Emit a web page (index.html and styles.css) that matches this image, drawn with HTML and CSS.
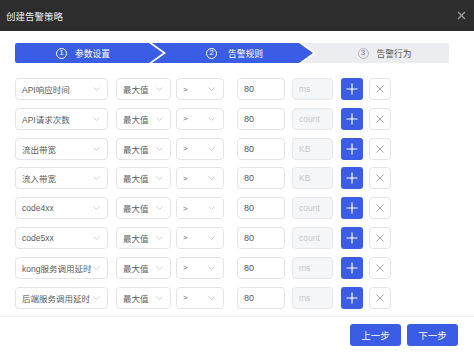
FILE: index.html
```html
<!DOCTYPE html>
<html lang="zh">
<head>
<meta charset="utf-8">
<link rel="stylesheet" href="styles.css">
</head>
<body>
<div class="dialog">
  <div class="header">
    <span class="title">创建告警策略</span>
    <svg class="close" width="9" height="9" viewBox="0 0 9 9"><path d="M1 1L8 8M8 1L1 8" stroke="#9a9a9a" stroke-width="1.4" fill="none"/></svg>
  </div>
  <div class="body">
    <div class="steps">
      <div class="step step1"><span class="num">1</span><span class="label">参数设置</span></div>
      <div class="step step2"><span class="num">2</span><span class="label">告警规则</span></div>
      <div class="step step3"><span class="num">3</span><span class="label">告警行为</span></div>
    </div>
    <div class="rows" id="rows"></div>
  </div>
  <div class="footer">
    <button class="btn">上一步</button>
    <button class="btn">下一步</button>
  </div>
</div>
<script src="app.js"></script>
</body>
</html>
```

FILE: app.js
```js
const data = [
  ["API响应时间", "ms"],
  ["API请求次数", "count"],
  ["流出带宽", "KB"],
  ["流入带宽", "KB"],
  ["code4xx", "count"],
  ["code5xx", "count"],
  ["kong服务调用延时", "ms"],
  ["后端服务调用延时", "ms"]
];
const arrow = '<svg class="arrow" width="7" height="4" viewBox="0 0 7 4"><path d="M0.5 0.5L3.5 3.5L6.5 0.5" stroke="#c4c4c4" stroke-width="0.8" fill="none"/></svg>';
const rows = document.getElementById("rows");
rows.innerHTML = data.map(([name, unit]) => `
  <div class="row">
    <div class="box sel sel1"><span>${name}</span>${arrow}</div>
    <div class="box sel sel2"><span>最大值</span>${arrow}</div>
    <div class="box sel sel3"><span class="gt">&gt;</span>${arrow}</div>
    <div class="box val">80</div>
    <div class="box unit">${unit}</div>
    <div class="add"><svg width="12" height="12" viewBox="0 0 12 12"><path d="M6 0.5V11.5M0.5 6H11.5" stroke="#fff" stroke-width="1.2"/></svg></div>
    <div class="box del"><svg width="8" height="8" viewBox="0 0 8 8"><path d="M0.5 0.5L7.5 7.5M7.5 0.5L0.5 7.5" stroke="#999" stroke-width="0.9"/></svg></div>
  </div>`).join("");
```

FILE: styles.css
```css
* { box-sizing: border-box; }
body {
  margin: 0;
  background: #fff;
  font-family: "Liberation Sans", "Noto Sans CJK SC", sans-serif;
}
.dialog {
  width: 474px;
  height: 356px;
  display: flex;
  flex-direction: column;
  background: #fff;
}
.header {
  height: 31px;
  background: #2d2d2d;
  display: flex;
  align-items: center;
  justify-content: space-between;
  padding: 0 8px 0 6px;
  flex-shrink: 0;
}
.title {
  color: #ececec;
  font-size: 9.5px;
  font-family: "Noto Sans CJK SC", sans-serif;
}
.body {
  padding: 12px 15px 0 15px;
}
.steps {
  display: flex;
  height: 20px;
}
.step {
  height: 20px;
  display: flex;
  align-items: center;
  justify-content: center;
  gap: 8px;
  font-size: 8.75px;
  font-family: "Noto Sans CJK SC", sans-serif;
  color: #fff;
  background: #3b5ce4;
}
.step1 {
  width: 148px;
  clip-path: polygon(0 0, calc(100% - 14px) 0, 100% 50%, calc(100% - 14px) 100%, 0 100%);
  border-radius: 2px 0 0 2px;
  padding-right: 12px;
}
.step2 {
  width: 161px;
  margin-left: -11px;
  clip-path: polygon(0 0, calc(100% - 14px) 0, 100% 50%, calc(100% - 14px) 100%, 0 100%, 14px 50%);
  padding-left: 4px;
  gap: 11px;
}
.step3 {
  width: 147px;
  margin-left: -11px;
  background: #ebedf0;
  color: #555;
  clip-path: polygon(0 0, 100% 0, 100% 100%, 0 100%, 14px 50%);
  padding-left: 18px;
}
.num {
  width: 11px;
  height: 11px;
  border: 1px solid #fff;
  border-radius: 50%;
  display: flex;
  align-items: center;
  justify-content: center;
  font-size: 8px;
  font-family: "Liberation Sans", sans-serif;
  line-height: 1;
}
.step3 .num {
  border-color: #b5b5b5;
  color: #777;
}
.rows {
  margin-top: 15px;
  display: flex;
  flex-direction: column;
  gap: 7.8px;
  padding-bottom: 7.5px;
  border-bottom: 1px solid #eeeeee;
  margin-left: -15px;
  margin-right: -15px;
  padding-left: 15px;
}
.row {
  display: flex;
  height: 22px;
  align-items: stretch;
}
.box {
  border: 1px solid #e2e4e8;
  border-radius: 4px;
  background: #fff;
  display: flex;
  align-items: center;
  font-size: 8.5px;
  color: #5a5c60;
  font-family: "Liberation Sans", "Noto Sans CJK SC", sans-serif;
}
.sel {
  justify-content: space-between;
  padding: 0 7px 0 6px;
}
.sel span { white-space: nowrap; }
.sel1 { width: 93px; }
.sel2 { width: 55px; margin-left: 8px; }
.sel3 { width: 48px; margin-left: 5px; padding-right: 8px; }
.gt { font-size: 8px; color: #666; }
.val { width: 48px; margin-left: 13px; padding-left: 6px; color: #555; font-size: 9px; }
.unit {
  width: 41px;
  margin-left: 7px;
  padding-left: 6px;
  background: #f5f6f8;
  border-color: #e6e8eb;
  color: #c6c8cc;
}
.add {
  width: 22px;
  margin-left: 8px;
  background: #3b5ce4;
  border-radius: 3px;
  display: flex;
  align-items: center;
  justify-content: center;
}
.del {
  width: 22px;
  margin-left: 6px;
  justify-content: center;
}
.footer {
  display: flex;
  justify-content: flex-end;
  gap: 6px;
  padding: 7px 16px 0 0;
}
.btn {
  width: 51px;
  height: 22px;
  border: none;
  border-radius: 3px;
  background: #3b5ce4;
  color: #fff;
  font-size: 9.5px;
  font-family: "Noto Sans CJK SC", sans-serif;
  padding: 0;
}
```
